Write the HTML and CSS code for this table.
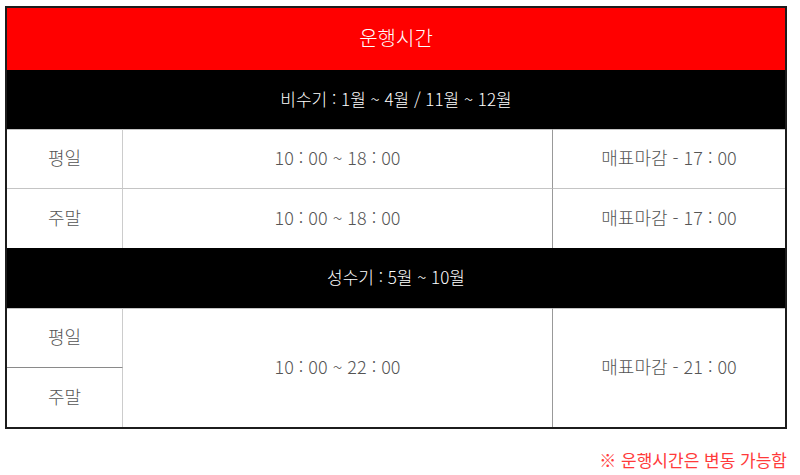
FILE: index.html
```html
<!DOCTYPE html>
<html lang="ko">
<head>
<meta charset="utf-8">
<title>운행시간</title>
<link rel="stylesheet" href="styles.css">
</head>
<body>
<div class="wrap">
  <div class="schedule">
    <div class="cell head">운행시간</div>
    <div class="cell season">비수기 : 1월 ~ 4월 / 11월 ~ 12월</div>
    <div class="cell day">평일</div>
    <div class="cell time">10 : 00 ~ 18 : 00</div>
    <div class="cell close">매표마감 - 17 : 00</div>
    <div class="cell day">주말</div>
    <div class="cell time">10 : 00 ~ 18 : 00</div>
    <div class="cell close">매표마감 - 17 : 00</div>
    <div class="cell season">성수기 : 5월 ~ 10월</div>
    <div class="cell day day-a">평일</div>
    <div class="cell time time-span">10 : 00 ~ 22 : 00</div>
    <div class="cell close close-span">매표마감 - 21 : 00</div>
    <div class="cell day day-b">주말</div>
  </div>
  <p class="note">※ 운행시간은 변동 가능함</p>
</div>
</body>
</html>
```
FILE: styles.css
```css
html, body {
  margin: 0;
  padding: 0;
  background: #ffffff;
}

.wrap {
  padding: 6px 0 0 5px;
  width: 782px;
  font-family: "Noto Sans CJK KR", "Noto Sans", sans-serif;
}

.schedule {
  display: grid;
  grid-template-columns: 116px 430px 232px;
  grid-template-rows: 62px 59px 59px 60px 60px 59px 60px;
  width: 782px;
  box-sizing: border-box;
  border: 2px solid #1c1c1c;
}

.cell {
  box-sizing: border-box;
  display: flex;
  align-items: center;
  justify-content: center;
  font-size: 18px;
  font-weight: 300;
  color: #555555;
  letter-spacing: 0;
  background: #ffffff;
  padding-bottom: 4px;
}

.head {
  grid-column: 1 / -1;
  background: #ff0000;
  color: #ffffff;
  font-size: 20px;
  padding-bottom: 3px;
}

.season {
  grid-column: 1 / -1;
  background: #000000;
  color: #ffffff;
  font-size: 17px;
  padding-bottom: 3px;
}

.day,
.time,
.close {
  border-top: 1px solid #c4c4c4;
}

.day {
  border-right: 1px solid #cccccc;
}

.time {
  border-right: 1px solid #999999;
}

.day-a {
  grid-column: 1;
  grid-row: 6;
}

.day-b {
  grid-column: 1;
  grid-row: 7;
  border-top: 1px solid #8a8a8a;
}

.time-span {
  grid-column: 2;
  grid-row: 6 / 8;
}

.close-span {
  grid-column: 3;
  grid-row: 6 / 8;
}

.note {
  margin: 20px 0 0;
  text-align: right;
  font-size: 17px;
  line-height: 22px;
  font-weight: 400;
  color: #ff3a3a;
  letter-spacing: 0;
}
```
